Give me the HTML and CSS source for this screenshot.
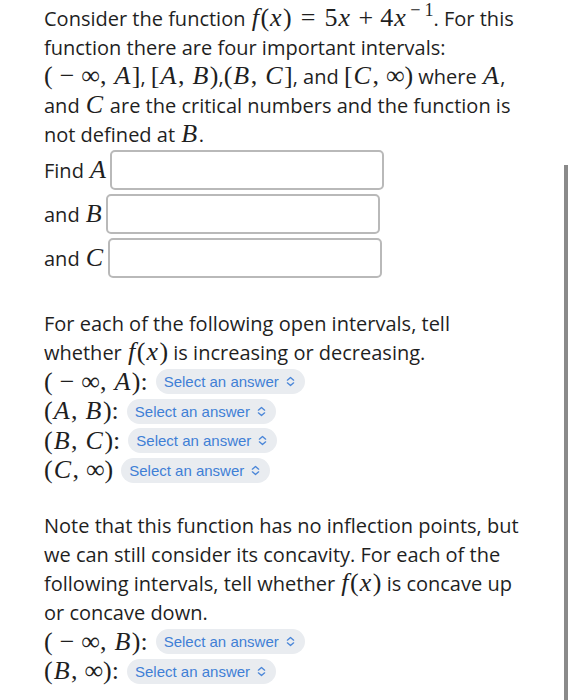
FILE: index.html
```html
<!DOCTYPE html>
<html>
<head>
<meta charset="utf-8">
<link rel="stylesheet" href="styles.css">
</head>
<body>
<div class="scrollbar"></div>
<div class="page">
  <p class="para">Consider the function <span class="m"><i>f</i>(<i>x</i>)<span class="op">=</span>5<i>x</i><span class="op2">+</span>4<i>x</i><sup><span class="sm">−</span>1</sup></span>. For this<br>function there are four important intervals:<br><span class="m">(<span class="op2">−</span>∞,<span class="th"></span><i>A</i>]</span>, <span class="m">[<i>A</i>,<span class="th"></span><i>B</i>)</span>,<span class="m">(<i>B</i>,<span class="th"></span><i>C</i>]</span>, and <span class="m">[<i>C</i>,<span class="th"></span>∞)</span> where <span class="m"><i>A</i></span>,<br>and <span class="m"><i>C</i></span> are the critical numbers and the function is<br>not defined at <span class="m"><i>B</i></span>.</p>

  <div class="inputs">
    <div class="row"><span class="lbl">Find <span class="m"><i>A</i></span></span><span class="box"></span></div>
    <div class="row"><span class="lbl">and <span class="m"><i>B</i></span></span><span class="box"></span></div>
    <div class="row"><span class="lbl">and <span class="m"><i>C</i></span></span><span class="box"></span></div>
  </div>

  <p class="para sec2">For each of the following open intervals, tell<br>whether <span class="m"><i>f</i>(<i>x</i>)</span> is increasing or decreasing.</p>
  <div class="selects">
    <div class="srow"><span class="m big">(<span class="op2">−</span>∞,<span class="th"></span><i>A</i>):</span><span class="pill">Select an answer <svg class="chev" viewBox="0 0 10 12" width="9" height="11"><path d="M1.5 4.5 L5 1.5 L8.5 4.5 M1.5 7.5 L5 10.5 L8.5 7.5" fill="none" stroke="#4a86d8" stroke-width="1.5" stroke-linecap="round" stroke-linejoin="round"/></svg></span></div>
    <div class="srow"><span class="m big">(<i>A</i>,<span class="th"></span><i>B</i>):</span><span class="pill">Select an answer <svg class="chev" viewBox="0 0 10 12" width="9" height="11"><path d="M1.5 4.5 L5 1.5 L8.5 4.5 M1.5 7.5 L5 10.5 L8.5 7.5" fill="none" stroke="#4a86d8" stroke-width="1.5" stroke-linecap="round" stroke-linejoin="round"/></svg></span></div>
    <div class="srow"><span class="m big">(<i>B</i>,<span class="th"></span><i>C</i>):</span><span class="pill">Select an answer <svg class="chev" viewBox="0 0 10 12" width="9" height="11"><path d="M1.5 4.5 L5 1.5 L8.5 4.5 M1.5 7.5 L5 10.5 L8.5 7.5" fill="none" stroke="#4a86d8" stroke-width="1.5" stroke-linecap="round" stroke-linejoin="round"/></svg></span></div>
    <div class="srow"><span class="m big">(<i>C</i>,<span class="th"></span>∞)</span><span class="pill">Select an answer <svg class="chev" viewBox="0 0 10 12" width="9" height="11"><path d="M1.5 4.5 L5 1.5 L8.5 4.5 M1.5 7.5 L5 10.5 L8.5 7.5" fill="none" stroke="#4a86d8" stroke-width="1.5" stroke-linecap="round" stroke-linejoin="round"/></svg></span></div>
  </div>

  <p class="para sec3">Note that this function has no inflection points, but<br>we can still consider its concavity. For each of the<br>following intervals, tell whether <span class="m"><i>f</i>(<i>x</i>)</span> is concave up<br>or concave down.</p>
  <div class="selects">
    <div class="srow"><span class="m big">(<span class="op2">−</span>∞,<span class="th"></span><i>B</i>):</span><span class="pill">Select an answer <svg class="chev" viewBox="0 0 10 12" width="9" height="11"><path d="M1.5 4.5 L5 1.5 L8.5 4.5 M1.5 7.5 L5 10.5 L8.5 7.5" fill="none" stroke="#4a86d8" stroke-width="1.5" stroke-linecap="round" stroke-linejoin="round"/></svg></span></div>
    <div class="srow"><span class="m big">(<i>B</i>,<span class="th"></span>∞):</span><span class="pill">Select an answer <svg class="chev" viewBox="0 0 10 12" width="9" height="11"><path d="M1.5 4.5 L5 1.5 L8.5 4.5 M1.5 7.5 L5 10.5 L8.5 7.5" fill="none" stroke="#4a86d8" stroke-width="1.5" stroke-linecap="round" stroke-linejoin="round"/></svg></span></div>
  </div>
</div>
</body>
</html>
```

FILE: styles.css
```css
html, body {
  margin: 0;
  padding: 0;
  background: #ffffff;
}
body {
  font-family: "Open Sans", "Noto Sans", sans-serif;
  font-size: 20px;
  color: #1f1f1f;
  overflow: hidden;
}
.page {
  padding: 4px 0 0 44px;
}
.para {
  margin: 0;
  line-height: 29px;
}
.m {
  font-family: "Liberation Serif", "DejaVu Serif", serif;
  font-size: 26px;
  line-height: 1;
}
.m i {
  padding: 0 1.5px 0 1px;
}
.op {
  margin: 0 9px;
}
.op2 {
  margin: 0 7px;
}
.th {
  display: inline-block;
  width: 7px;
}
.m sup {
  font-size: 0.7em;
  vertical-align: 0.55em;
  line-height: 0;
  margin-left: 3px;
}
.sm {
  margin-right: 4px;
}
.inputs {
  display: flex;
  flex-direction: column;
  gap: 4px;
  margin-top: 1px;
}
.row {
  display: flex;
  align-items: center;
  gap: 3px;
  height: 40px;
}
.box {
  display: block;
  width: 270px;
  height: 36px;
  border: 2px solid #b9b9b9;
  border-radius: 5px;
}
.sec2 {
  margin-top: 31px;
}
.selects {
  display: flex;
  flex-direction: column;
}
.srow {
  display: flex;
  align-items: center;
  gap: 8px;
  height: 29.5px;
}
.big {
  font-size: 26px;
}
.pill {
  display: inline-flex;
  align-items: center;
  gap: 4px;
  height: 25px;
  padding: 0 10px 0 8px;
  border-radius: 12.5px;
  background: #e9ecf0;
  color: #3f7fd6;
  font-family: "Liberation Sans", "Inter", sans-serif;
  font-size: 15px;
}
.chev { display: block; margin-left: 3px; }
.sec3 {
  margin-top: 26px;
}
.scrollbar {
  position: absolute;
  left: 564px;
  top: 165px;
  width: 4px;
  height: 560px;
  background: #8a8a8a;
}
```
